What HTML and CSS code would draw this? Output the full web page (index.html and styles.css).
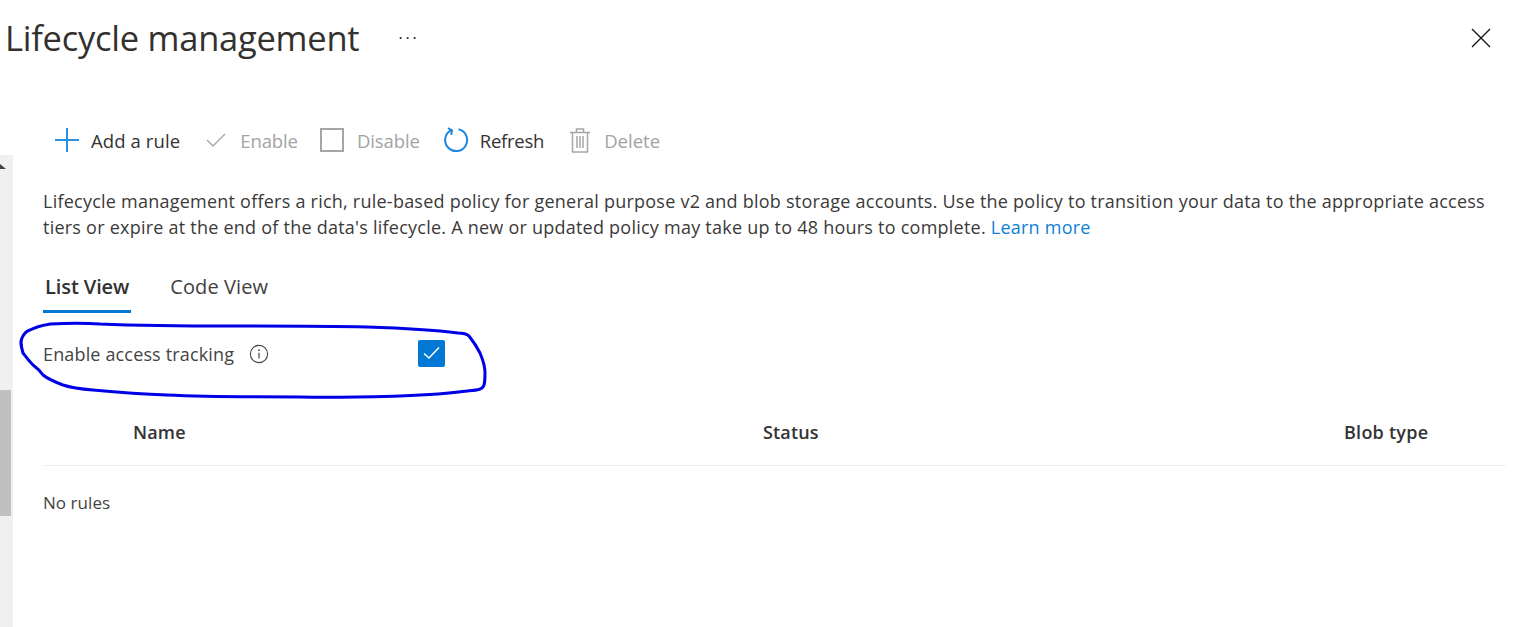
FILE: index.html
```html
<!DOCTYPE html>
<html lang="en">
<head>
<meta charset="utf-8">
<title>Lifecycle management</title>
<link rel="stylesheet" href="styles.css">
</head>
<body>
<div class="page">
  <header class="title-bar">
    <h1 class="title">Lifecycle management</h1>
    <span class="more">···</span>
    <svg class="close" width="20" height="20" viewBox="0 0 20 20"><path d="M1 1 L19 19 M19 1 L1 19" stroke="#111" stroke-width="1.3" fill="none"/></svg>
  </header>
  <div class="body-row">
    <div class="rail">
      <span class="rail-arrow"></span>
      <div class="rail-thumb"></div>
    </div>
    <main class="content">
      <div class="toolbar">
        <button class="tool tool-add">
          <svg width="24" height="24" viewBox="0 0 24 24"><path d="M12 0 V24 M0 12 H24" stroke="#2b8fe3" stroke-width="2" fill="none"/></svg>
          <span>Add a rule</span>
        </button>
        <button class="tool tool-off tool-enable">
          <svg width="20" height="16" viewBox="0 0 20 16"><path d="M1 8 L7 14 L19 2" stroke="#a6a6a6" stroke-width="1.4" fill="none"/></svg>
          <span>Enable</span>
        </button>
        <button class="tool tool-off tool-disable">
          <svg width="24" height="24" viewBox="0 0 24 24"><rect x="1" y="1" width="22" height="22" stroke="#a6a6a6" stroke-width="2" fill="none"/></svg>
          <span>Disable</span>
        </button>
        <button class="tool tool-refresh">
          <svg width="26" height="26" viewBox="0 0 26 26"><path d="M8 3.3 A11 11 0 1 0 15.5 2.3" stroke="#1e88e0" stroke-width="2" fill="none"/><path d="M5 1.2 L9 3.4 L8.2 8" stroke="#1e88e0" stroke-width="2" fill="none"/></svg>
          <span>Refresh</span>
        </button>
        <button class="tool tool-off tool-delete">
          <svg width="20" height="25" viewBox="0 0 20 25"><path d="M0 4.5 H20 M6.5 4 V1 H13.5 V4 M2.5 5 V24 H17.5 V5 M7 8 V20 M10 8 V20 M13 8 V20" stroke="#a6a6a6" stroke-width="1.5" fill="none"/></svg>
          <span>Delete</span>
        </button>
      </div>
      <p class="intro">Lifecycle management offers a rich, rule-based policy for general purpose v2 and blob storage accounts. Use the policy to transition your data to the appropriate access tiers or expire at the end of the data's lifecycle. A new or updated policy may take up to 48 hours to complete. <a class="link" href="#">Learn more</a></p>
      <nav class="tabs">
        <span class="tab tab-active">List View</span>
        <span class="tab">Code View</span>
      </nav>
      <div class="tracking">
        <span class="tracking-label">Enable access tracking</span>
        <svg class="info" width="20" height="20" viewBox="0 0 20 20"><circle cx="10" cy="10" r="8.6" stroke="#444" stroke-width="1.1" fill="none"/><path d="M10 8.8 V14.5" stroke="#444" stroke-width="1.2"/><circle cx="10" cy="6.2" r="0.9" fill="#444"/></svg>
        <span class="checkbox">
          <svg width="17" height="14" viewBox="0 0 17 14"><path d="M1 7.5 L6 12 L16 1.5" stroke="#fff" stroke-width="1.5" fill="none"/></svg>
        </span>
      </div>
      <div class="table-head">
        <span class="col col-name">Name</span>
        <span class="col col-status">Status</span>
        <span class="col col-blob">Blob type</span>
      </div>
      <p class="empty">No rules</p>
    </main>
  </div>
  <svg class="ink" width="1526" height="627" viewBox="0 0 1526 627"><path d="M50 324 C70 323 85 323 100 324 C150 326 190 326 233 326 C280 326 325 326 367 327 C400 328 435 330 458 333 C464 333 467 334 469 336 C473 341 477 347 480 353 C483 360 485 366 485 373 C485 380 485 386 482 388 C478 391 472 390 467 391 C445 394 425 395 400 396 C365 397 335 398 300 397 C255 397 210 397 167 395 C140 394 115 392 93 390 C80 389 72 388 63 385 C55 382 48 379 43 375 C40 370 37 368 33 365 C28 360 26 357 23 353 C21 346 20 342 22 338 C24 333 27 331 30 330 C37 326 44 325 50 324 Z" stroke="#0000e6" stroke-width="3" fill="none"/></svg>
</div>
</body>
</html>
```
FILE: styles.css
```css
* { box-sizing: border-box; }
html, body { margin: 0; height: 100%; background: #fff; }
body { font-family: "Open Sans", "Noto Sans", sans-serif; color: #333; overflow: hidden; }
.page { position: relative; width: 1526px; height: 627px; display: flex; flex-direction: column; }

.title-bar { height: 78px; display: flex; align-items: center; padding: 0 0 2px 5px; flex: none; }
.title { margin: 0; font-size: 34.5px; font-weight: 400; line-height: 44px; color: #323130; letter-spacing: -0.25px; }
.more { margin-left: 39px; font-size: 16px; color: #222; letter-spacing: 2.8px; }
.close { margin-left: auto; margin-right: 35px; }

.body-row { flex: 1; display: flex; min-height: 0; }
.rail { position: relative; width: 13px; margin-top: 77px; background: #f0f0f0; flex: none; padding-top: 235px; }
.rail-arrow { position: absolute; left: 0; top: 9px; border-style: solid; border-width: 0 6px 5px 0; border-color: transparent transparent #444 transparent; }
.rail-thumb { width: 11px; height: 126px; background: #c0c0c0; }

.content { flex: 1; min-width: 0; padding: 0 20px 0 30px; }

.toolbar { display: flex; align-items: center; height: 50px; margin-top: 37px; }
.tool { display: flex; align-items: center; gap: 12px; padding: 0; border: 0; background: none; font: inherit; font-size: 18.5px; letter-spacing: 0; color: #333; }
.tool-add { margin-left: 12px; letter-spacing: 0.1px; }
.tool-enable { margin-left: 26px; gap: 14px; letter-spacing: -0.1px; }
.tool-disable { margin-left: 22px; gap: 13px; letter-spacing: -0.1px; }
.tool-refresh { margin-left: 23px; gap: 11px; letter-spacing: -0.25px; }
.tool-delete { margin-left: 26px; gap: 14px; }
.tool-off { color: #a3a3a3; }

.intro { margin: 23px 0 0; font-size: 18px; line-height: 26px; color: #3b3a39; letter-spacing: 0.235px; }
.link { color: #0f7fd6; text-decoration: none; }

.tabs { display: flex; gap: 37px; margin-top: 34px; }
.tab { font-size: 20px; line-height: 26px; padding: 0 2px 10px; letter-spacing: 0.1px; color: #404040; border-bottom: 3px solid transparent; }
.tab-active { color: #323130; border-bottom-color: #0078d4; font-weight: 600; letter-spacing: -0.1px; }

.tracking { display: flex; align-items: center; height: 40px; margin-top: 20px; }
.tracking-label { font-size: 18px; letter-spacing: 0.15px; color: #444; width: 206px; white-space: nowrap; padding-top: 2px; }
.info { flex: none; margin-top: 2px; }
.checkbox { display: flex; align-items: center; justify-content: center; width: 27px; height: 27px; margin-left: 149px; background: #0078d4; border-radius: 2px; }

.table-head { display: grid; grid-template-columns: 630px 581px auto; height: 94px; padding: 48px 0 0 90px; border-bottom: 1px solid #efefef; margin-top: -1px; }
.col { font-size: 18px; font-weight: 600; line-height: 24px; color: #333; letter-spacing: 0.15px; }
.col-blob { letter-spacing: 0.25px; }

.empty { margin: 26px 0 0; font-size: 17px; line-height: 22px; color: #444; letter-spacing: 0.05px; }

.ink { position: absolute; left: 0; top: 0; pointer-events: none; }
```
